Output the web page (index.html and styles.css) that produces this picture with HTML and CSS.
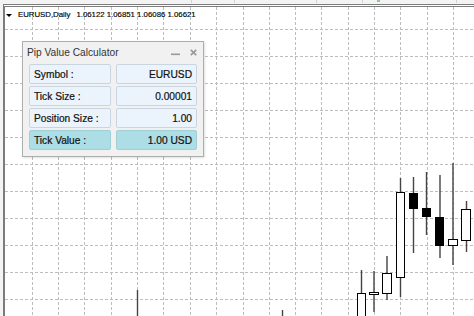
FILE: index.html
```html
<!DOCTYPE html>
<html>
<head>
<meta charset="utf-8">
<title>EURUSD Daily – Pip Value Calculator</title>
<link rel="stylesheet" href="styles.css">
</head>
<body>
<div class="app">
  <div class="toolbar">
    <span class="tb tb-a"></span>
    <span class="tb tb-b"></span>
    <span class="tb tb-c"></span>
    <span class="tb tb-d"></span>
    <span class="tb tb-green"></span>
    <span class="tb tb-e"></span>
  </div>
  <div class="workspace">
    <div class="gutter"></div>
    <div class="chart">
      <svg class="plot" viewBox="5 7 469 309" width="469" height="309" xmlns="http://www.w3.org/2000/svg">
        <g class="grid" stroke="#bdbdbd" stroke-width="1" stroke-dasharray="3 2" fill="none">
          <line x1="32.5" y1="7" x2="32.5" y2="316"/>
          <line x1="58.5" y1="7" x2="58.5" y2="316"/>
          <line x1="84.5" y1="7" x2="84.5" y2="316"/>
          <line x1="111.5" y1="7" x2="111.5" y2="316"/>
          <line x1="137.5" y1="7" x2="137.5" y2="316"/>
          <line x1="163.5" y1="7" x2="163.5" y2="316"/>
          <line x1="190.5" y1="7" x2="190.5" y2="316"/>
          <line x1="216.5" y1="7" x2="216.5" y2="316"/>
          <line x1="243.5" y1="7" x2="243.5" y2="316"/>
          <line x1="269.5" y1="7" x2="269.5" y2="316"/>
          <line x1="295.5" y1="7" x2="295.5" y2="316"/>
          <line x1="321.5" y1="7" x2="321.5" y2="316"/>
          <line x1="348.5" y1="7" x2="348.5" y2="316"/>
          <line x1="374.5" y1="7" x2="374.5" y2="316"/>
          <line x1="400.5" y1="7" x2="400.5" y2="316"/>
          <line x1="427.5" y1="7" x2="427.5" y2="316"/>
          <line x1="453.5" y1="7" x2="453.5" y2="316"/>
          <line x1="5" y1="29.5" x2="474" y2="29.5"/>
          <line x1="5" y1="56.5" x2="474" y2="56.5"/>
          <line x1="5" y1="83.5" x2="474" y2="83.5"/>
          <line x1="5" y1="110.5" x2="474" y2="110.5"/>
          <line x1="5" y1="137.5" x2="474" y2="137.5"/>
          <line x1="5" y1="164.5" x2="474" y2="164.5"/>
          <line x1="5" y1="191.5" x2="474" y2="191.5"/>
          <line x1="5" y1="218.5" x2="474" y2="218.5"/>
          <line x1="5" y1="245.5" x2="474" y2="245.5"/>
          <line x1="5" y1="272.5" x2="474" y2="272.5"/>
          <line x1="5" y1="299.5" x2="474" y2="299.5"/>
        </g>
        <g class="wicks" stroke="#444" stroke-width="1.4">
          <line x1="137.5" y1="290" x2="137.5" y2="316"/>
          <line x1="282.5" y1="310" x2="282.5" y2="316"/>
          <line x1="361.5" y1="270" x2="361.5" y2="316"/>
          <line x1="374" y1="271" x2="374" y2="312"/>
          <line x1="387" y1="256" x2="387" y2="300"/>
          <line x1="400.5" y1="178" x2="400.5" y2="297"/>
          <line x1="413.5" y1="177" x2="413.5" y2="253"/>
          <line x1="426.5" y1="172" x2="426.5" y2="235"/>
          <line x1="440" y1="175" x2="440" y2="258"/>
          <line x1="453" y1="163" x2="453" y2="265"/>
          <line x1="466.5" y1="201" x2="466.5" y2="252"/>
        </g>
        <g class="bodies" stroke="#000" stroke-width="1">
          <rect x="357.5" y="293.5" width="8" height="30" fill="#fff"/>
          <rect x="369.5" y="292.5" width="9" height="2" fill="#fff"/>
          <rect x="382.5" y="273.5" width="9" height="20" fill="#fff"/>
          <rect x="396.5" y="192.5" width="8" height="85" fill="#fff"/>
          <rect x="409.5" y="193.5" width="8" height="15" fill="#000"/>
          <rect x="422.5" y="208.5" width="8" height="8" fill="#000"/>
          <rect x="435.5" y="217.5" width="8" height="28" fill="#000"/>
          <rect x="448.5" y="239.5" width="9" height="6" fill="#fff"/>
          <rect x="461.5" y="209.5" width="9" height="31" fill="#fff"/>
        </g>
      </svg>

      <div class="legend">
        <span class="tri"></span>
        <span class="sym">EURUSD,Daily</span>
        <span class="ohlc">1.06122 1.06851 1.06086 1.06621</span>
      </div>

      <div class="dialog">
        <div class="dlg-title">
          <span class="dlg-name">Pip Value Calculator</span>
          <span class="dlg-btns">
            <svg class="btn-min" width="9" height="8" viewBox="0 0 9 8"><rect x="0" y="5.5" width="9" height="1.6" fill="#9a9a9a"/></svg>
            <svg class="btn-close" width="7" height="7" viewBox="0 0 7 7"><path d="M0.8 0.8 L6.2 6.2 M6.2 0.8 L0.8 6.2" stroke="#9a9a9a" stroke-width="1.7"/></svg>
          </span>
        </div>
        <div class="dlg-grid">
          <div class="cell label">Symbol :</div>
          <div class="cell value">EURUSD</div>
          <div class="cell label">Tick Size :</div>
          <div class="cell value">0.00001</div>
          <div class="cell label">Position Size :</div>
          <div class="cell value">1.00</div>
          <div class="cell label result">Tick Value :</div>
          <div class="cell value result">1.00 USD</div>
        </div>
      </div>
    </div>
  </div>
</div>
</body>
</html>
```

FILE: styles.css
```css
* { box-sizing: border-box; }

html, body {
  margin: 0;
  padding: 0;
  width: 474px;
  height: 316px;
  overflow: hidden;
  background: #f3f3f3;
  font-family: "Liberation Sans", Arial, sans-serif;
}

.app {
  display: flex;
  flex-direction: column;
  width: 474px;
  height: 316px;
}

.toolbar {
  height: 4px;
  flex: none;
  display: flex;
  align-items: stretch;
  background: #f3f3f3;
}

.tb { display: block; height: 3px; border-right: 1px solid #d2d2d2; }
.tb-a { width: 192px; }
.tb-b { width: 43px; }
.tb-c { width: 82px; }
.tb-d { width: 46px; }
.tb-green { width: 3px; margin-left: 14px; background: #8fc98f; border-right: none; height: 2px; }
.tb-e { width: 77px; }

.workspace {
  flex: 1;
  display: flex;
  min-height: 0;
}

.gutter {
  width: 3px;
  flex: none;
  background: #f3f3f3;
}

.chart {
  position: relative;
  flex: 1;
  background: #fff;
  border-left: 2px solid #7c7c7c;
  border-top: 3px double #7c7c7c;
  overflow: hidden;
}

.plot {
  display: block;
}

.legend {
  position: absolute;
  left: 1px;
  top: 3px;
  height: 10px;
  display: flex;
  align-items: center;
  font-size: 7.8px;
  line-height: 10px;
  color: #000;
  white-space: nowrap;
  -webkit-text-stroke: 0.15px #000;
}

.tri {
  width: 0;
  height: 0;
  border-left: 3px solid transparent;
  border-right: 3px solid transparent;
  border-top: 3.5px solid #000;
  margin-right: 6px;
}

.sym { margin-right: 6px; }

.dialog {
  position: absolute;
  left: 17px;
  top: 34px;
  width: 182px;
  height: 116px;
  background: #f1f1f1;
  border: 1px solid #adadad;
  box-shadow: 1px 1px 2px rgba(0, 0, 0, 0.12);
  padding: 0 6px 6px 6px;
  display: flex;
  flex-direction: column;
}

.dlg-title {
  height: 22px;
  flex: none;
  display: flex;
  align-items: center;
  justify-content: space-between;
  padding: 0 0 2px 0;
  margin-left: -2px;
}

.dlg-name {
  font-size: 10.2px;
  color: #333;
}

.dlg-btns {
  display: flex;
  align-items: center;
  gap: 10px;
}

.btn-min, .btn-close { display: block; }

.dlg-grid {
  display: grid;
  grid-template-columns: 1fr 1fr;
  grid-auto-rows: 20px;
  column-gap: 5px;
  row-gap: 2px;
}

.cell {
  background: #ebf4fc;
  border: 1px solid #c9d6e2;
  border-radius: 2px;
  font-size: 10.2px;
  color: #111;
  -webkit-text-stroke: 0.2px #111;
  display: flex;
  align-items: center;
  padding: 0 4px;
  white-space: nowrap;
}

.value { justify-content: flex-end; }

.cell.result {
  background: #addde5;
  border-color: #9fd0d8;
}
```
